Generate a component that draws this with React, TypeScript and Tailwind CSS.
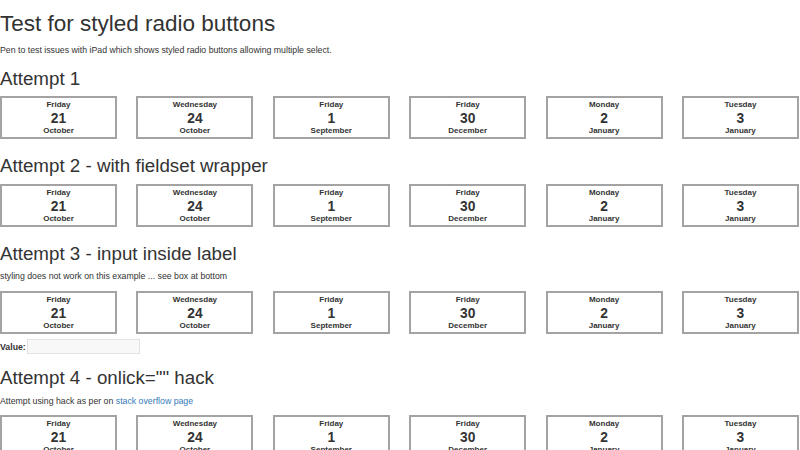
import React from "react";

const dates = [
  { day: "Friday", num: "21", month: "October" },
  { day: "Wednesday", num: "24", month: "October" },
  { day: "Friday", num: "1", month: "September" },
  { day: "Friday", num: "30", month: "December" },
  { day: "Monday", num: "2", month: "January" },
  { day: "Tuesday", num: "3", month: "January" },
];

function Cards() {
  return (
    <div className="flex gap-[19.4px]">
      {dates.map((d, i) => (
        <div
          key={i}
          className="w-[117px] h-[43px] shrink-0 border-2 border-[#a3a3a3] bg-white flex flex-col items-center pt-[1px] font-bold text-[#333]"
        >
          <div className="text-[8px] leading-[11px]">{d.day}</div>
          <div className="text-[13.8px] leading-[17px]">{d.num}</div>
          <div className="text-[8px] leading-[8px]">{d.month}</div>
        </div>
      ))}
    </div>
  );
}

export default function App() {
  return (
    <div
      className="w-[800px] h-[450px] overflow-hidden bg-white text-[#333]"
      style={{ fontFamily: '"Liberation Sans", Arial, sans-serif' }}
    >
      <h1 className="text-[22.5px] leading-[24.7px] font-normal pt-[11.5px]">
        Test for styled radio buttons
      </h1>
      <p className="text-[8.75px] leading-[12.5px] mt-[7.4px]">
        Pen to test issues with iPad which shows styled radio buttons allowing multiple select.
      </p>

      <h2 className="text-[18.75px] leading-[20.6px] font-normal mt-[13px]">Attempt 1</h2>
      <div className="mt-[6.6px]">
        <Cards />
      </div>

      <h2 className="text-[18.75px] leading-[20.6px] font-normal mt-[16.5px]">
        Attempt 2 - with fieldset wrapper
      </h2>
      <fieldset className="mt-[7.6px]">
        <Cards />
      </fieldset>

      <h2 className="text-[18.75px] leading-[20.6px] font-normal mt-[17px]">
        Attempt 3 - input inside label
      </h2>
      <p className="text-[8.75px] leading-[12.5px] mt-[5.6px]">
        styling does not work on this example ... see box at bottom
      </p>
      <div className="mt-[8px]">
        <Cards />
      </div>
      <div className="flex items-center mt-[5.5px] h-[15.3px]">
        <span className="text-[8.75px] font-bold leading-[12px]">Value:</span>
        <div className="w-[113.6px] h-[15.3px] border border-[#e2e2e2] bg-[#f8f8f8] ml-[1px]" />
      </div>

      <h2 className="text-[18.75px] leading-[20.6px] font-normal mt-[14px]">
        Attempt 4 - onlick="" hack
      </h2>
      <p className="text-[8.75px] leading-[12.5px] mt-[5.6px]">
        Attempt using hack as per on <a className="text-[#337ab7]">stack overflow page</a>
      </p>
      <div className="mt-[7.4px]">
        <Cards />
      </div>
    </div>
  );
}
